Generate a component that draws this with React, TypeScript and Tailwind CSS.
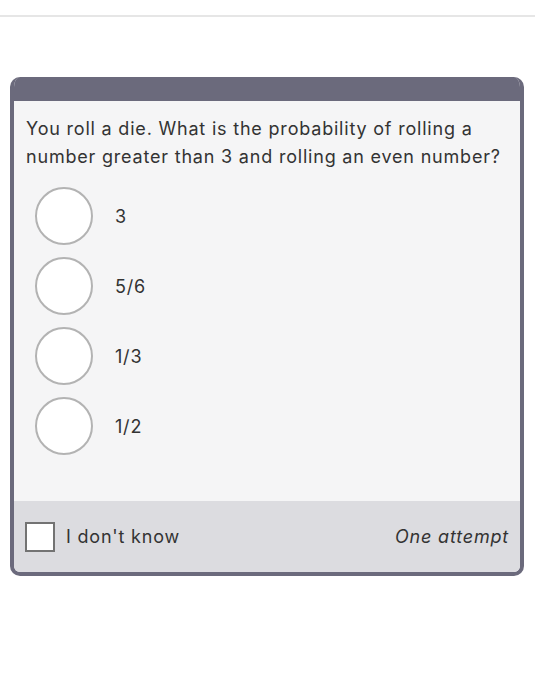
const OPTIONS = ['3', '5/6', '1/3', '1/2'];

export default function App() {
  return (
    <div className="min-h-[700px] bg-white font-['Inter',sans-serif] tracking-[0.8px] text-[#333333]">
      <div className="h-[15px]" />
      <div className="h-[2px] bg-[#e6e6e6]" />
      <div className="h-[60px]" />
      <div className="ml-[10px] w-[514px] rounded-[10px] border-x-4 border-b-4 border-[#6b6a7c] bg-[#f5f5f6] overflow-hidden">
        <div className="h-[24px] bg-[#6b6a7c]" />
        <div className="px-[12px] pt-[14px] pb-[46px]">
          <p className="text-[18px] leading-[28px]">
            You roll a die. What is the probability of rolling a number greater than 3 and rolling an even number?
          </p>
          <div className="mt-[16px] flex flex-col gap-[12px] pl-[9px]">
            {OPTIONS.map((o) => (
              <label key={o} className="flex items-center gap-[22px]">
                <span className="h-[58px] w-[58px] shrink-0 rounded-full border-2 border-[#b3b3b3] bg-white" />
                <span className="text-[18px]">{o}</span>
              </label>
            ))}
          </div>
        </div>
        <div className="flex h-[71px] items-center justify-between bg-[#dcdce0] pl-[11px] pr-[11px]">
          <label className="flex items-center gap-[11px]">
            <span className="h-[30px] w-[30px] border-2 border-[#737373] bg-white" />
            <span className="text-[18px]">I don't know</span>
          </label>
          <span className="text-[18px] italic">One attempt</span>
        </div>
      </div>
    </div>
  );
}
